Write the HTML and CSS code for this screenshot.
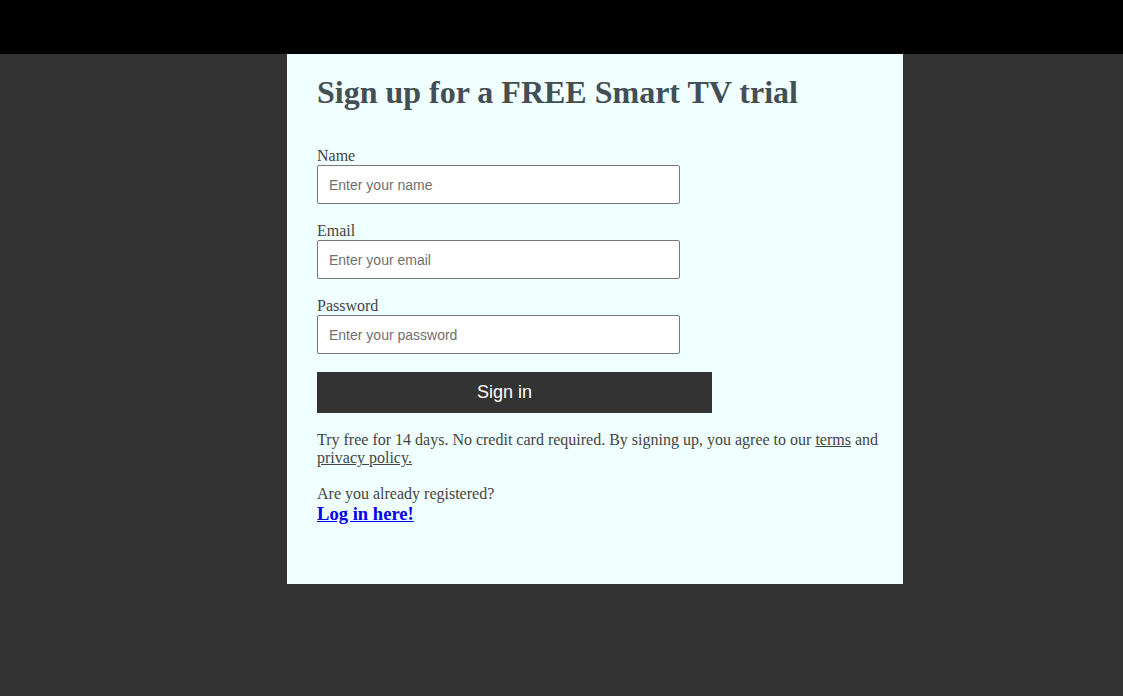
FILE: index.html
```html
<!DOCTYPE html>
<html lang="en">
<head>
<meta charset="utf-8">
<title>Sign up</title>
<link rel="stylesheet" href="styles.css">
</head>
<body>
<header class="topbar"></header>
<main class="stage">
  <section class="card">
    <h1 class="title">Sign up for a FREE Smart TV trial</h1>
    <form class="form">
      <div class="field">
        <label class="label" for="name">Name</label>
        <input class="input" id="name" type="text" placeholder="Enter your name">
      </div>
      <div class="field">
        <label class="label" for="email">Email</label>
        <input class="input" id="email" type="email" placeholder="Enter your email">
      </div>
      <div class="field">
        <label class="label" for="password">Password</label>
        <input class="input" id="password" type="password" placeholder="Enter your password">
      </div>
      <button class="btn" type="button">Sign in</button>
    </form>
    <p class="note">Try free for 14 days. No credit card required. By signing up, you agree to our <a class="plain-link" href="#">terms</a> and <a class="plain-link" href="#">privacy policy.</a></p>
    <p class="registered">Are you already registered?<br><a class="login" href="#">Log in here!</a></p>
  </section>
</main>
</body>
</html>
```
FILE: styles.css
```css
html, body {
  margin: 0;
  padding: 0;
}
body {
  background: #333333;
  height: 696px;
  font-family: "Liberation Serif", "Times New Roman", serif;
  color: #444;
}
.topbar {
  height: 54px;
  background: #000;
}
.stage {
  display: grid;
  grid-template-columns: 287px 616px 1fr;
}
.card {
  grid-column: 2;
  background: #f0ffff;
  height: 530px;
  box-sizing: border-box;
  padding: 1px 20px 0 30px;
}
.title {
  font-size: 32px;
  font-weight: bold;
  color: #444f55;
  margin: 19px 0 36px;
  line-height: 37px;
}
.form {
  display: flex;
  flex-direction: column;
}
.field {
  display: flex;
  flex-direction: column;
  margin-bottom: 18px;
}
.label {
  font-size: 16px;
  line-height: 18px;
  color: #444;
}
.input {
  width: 363px;
  height: 39px;
  box-sizing: border-box;
  border: 1px solid #767676;
  border-radius: 2px;
  padding: 0 11px;
  font-family: "Liberation Sans", Arial, sans-serif;
  font-size: 14px;
  background: #fff;
  margin: 0;
}
.input::placeholder {
  color: #707070;
}
.btn {
  width: 395px;
  height: 41px;
  margin-top: 0;
  border: none;
  background: #333;
  color: #fff;
  font-family: "Liberation Sans", Arial, sans-serif;
  font-size: 18px;
  padding: 0 20px 0 0;
  text-align: center;
}
.note {
  font-size: 16px;
  line-height: 18px;
  margin: 18px 0 0;
}
.plain-link {
  color: #444;
}
.registered {
  font-size: 16px;
  line-height: 18px;
  margin: 18px 0 0;
}
.login {
  font-size: 18.6px;
  font-weight: bold;
  color: #0000ee;
  line-height: 22px;
}
```
